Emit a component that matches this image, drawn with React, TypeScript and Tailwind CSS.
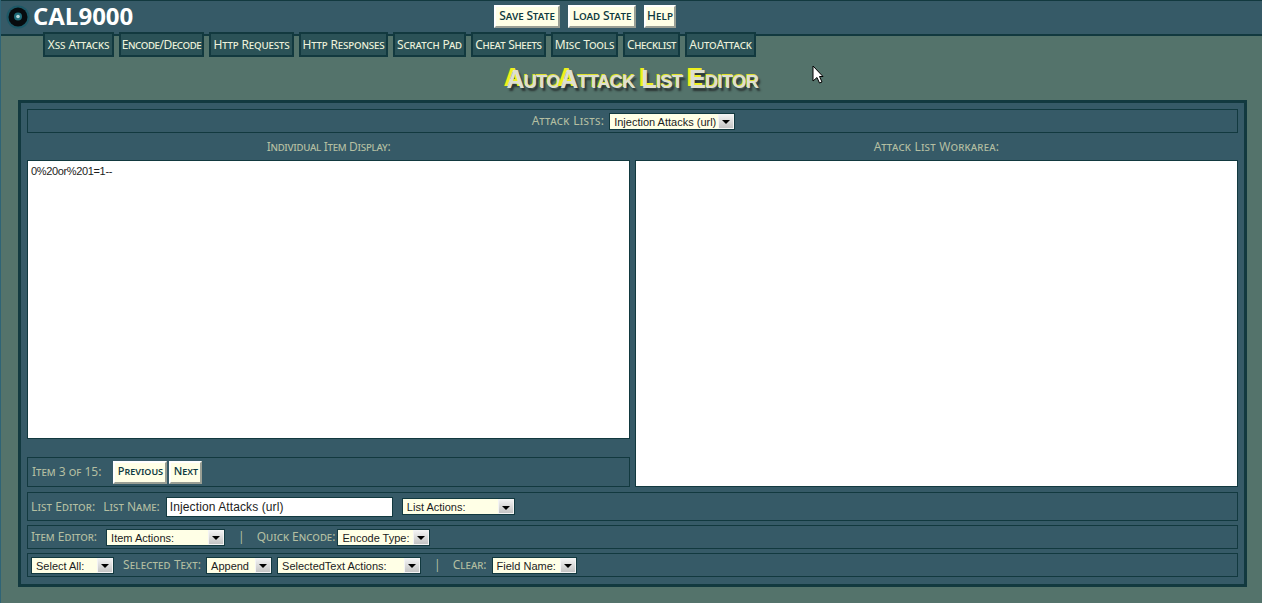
const navItems = [
  { label: "Xss Attacks", width: "w-[71px] tracking-[-0.1px]" },
  { label: "Encode/Decode", width: "w-[85px] tracking-[-0.4px]" },
  { label: "Http Requests", width: "w-[85px] tracking-[-0.15px]" },
  { label: "Http Responses", width: "w-[89px] tracking-[-0.15px]" },
  { label: "Scratch Pad", width: "w-[73px] tracking-[-0.15px]" },
  { label: "Cheat Sheets", width: "w-[75px] tracking-[-0.3px]" },
  { label: "Misc Tools", width: "w-[67px] tracking-[-0.15px]" },
  { label: "Checklist", width: "w-[57px] tracking-[-0.3px]" },
  { label: "AutoAttack", width: "w-[71px] tracking-[-0.15px]" },
];

function Select({ label, className }: { label: string; className: string }) {
  return (
    <div className={`flex h-[17px] shrink-0 border border-[#12393f] bg-[#ffffe6] ${className}`}>
      <span className="flex-1 overflow-hidden whitespace-nowrap pl-[4px] font-['Liberation_Sans',sans-serif] text-[11px] leading-[16px] text-[#1c1c1c] [font-variant:normal]">
        {label}
      </span>
      <span className="flex w-[16px] items-center justify-center border border-[#f4f4f4] bg-gradient-to-b from-[#f2f2f2] to-[#c4c4c4]">
        <span className="mt-[2px] h-0 w-0 border-x-[4px] border-t-[4px] border-x-transparent border-t-black" />
      </span>
    </div>
  );
}

function CreamButton({ label, className }: { label: string; className: string }) {
  return (
    <button className={`flex items-center justify-center border-2 border-b-[#9a9f94] border-l-[#ffffff] border-r-[#9a9f94] border-t-[#ffffff] bg-[#ffffe6] pb-[1px] font-medium text-[#0e3a40] ${className}`}>
      {label}
    </button>
  );
}

// capitals carry the wider yellow offset, like the reference's title
function Cap({ children }: { children: string }) {
  return <span className="[text-shadow:-3px_-2px_0_#eef01e,2px_3px_2px_#2a3433]">{children}</span>;
}

export default function App() {
  return (
    <div className="min-h-screen border-l border-l-[#2f6476] bg-[#54736b] font-['Noto_Sans',sans-serif] [font-variant:small-caps]">
      <header className="flex h-[36px] items-start border-y-2 border-t-[1px] border-y-[#12393f] bg-[#365a67]">
        <svg viewBox="0 0 24 24" className="ml-[5px] mt-[4px] h-[24px] w-[24px] shrink-0">
          <circle cx="12" cy="12" r="11.5" fill="#1d5866" />
          <circle cx="12" cy="12" r="9.5" fill="#070b0e" />
          <circle cx="12" cy="11.5" r="4" fill="#1f6b78" />
          <circle cx="12" cy="11.5" r="1.8" fill="#b9d6d8" />
        </svg>
        <h1 className="ml-[3px] w-[461px] shrink-0 font-['Open_Sans',sans-serif] text-[24px] font-bold leading-[29px] text-white [font-variant:normal]">
          CAL9000
        </h1>
        <div className="mt-[4px] flex gap-[8px]">
          <CreamButton label="Save State" className="h-[23px] w-[66px] text-[12px] tracking-[-0.1px]" />
          <CreamButton label="Load State" className="h-[23px] w-[68px] text-[12px] tracking-[-0.1px]" />
          <CreamButton label="Help" className="h-[23px] w-[32px] text-[12px]" />
        </div>
      </header>

      <nav className="-mt-[4px] ml-[42px] flex gap-[5px]">
        {navItems.map((item) => (
          <a
            key={item.label}
            className={`flex h-[25px] items-center justify-center whitespace-nowrap border-2 border-[#12393f] bg-[#2b5257] text-[12px] leading-none text-[#eef2dc] ${item.width}`}
          >
            {item.label}
          </a>
        ))}
      </nav>

      <h2 className="mt-[7px] pl-[2px] text-center font-['Liberation_Sans',sans-serif] text-[25px] font-bold leading-[30px] tracking-[-0.5px] text-[#dedfd0] [text-shadow:-1px_-1px_0_#dfe02a,2px_3px_2px_#2a3433]">
        <Cap>A</Cap>uto<Cap>A</Cap>ttack <Cap>L</Cap>ist <Cap>E</Cap>ditor
      </h2>

      <main className="ml-[17px] mr-[15px] mt-[6px] h-[487px] border-[3px] border-[#12393f] bg-[#365a67] px-[6px] pt-[6px] text-[12px] text-[#b4bfa2]">
        <div className="flex h-[24px] items-center justify-center gap-[5px] border border-[#12393f] pl-[2px]">
          <span className="tracking-[0.3px]">Attack Lists:</span>
          <Select label="Injection Attacks (url)" className="w-[126px]" />
        </div>

        <div className="grid grid-cols-[603px_603px] gap-x-[5px]">
          <div>
            <div className="flex h-[27px] items-center justify-center tracking-[-0.3px]">Individual Item Display:</div>
            <div className="h-[279px] border border-[#12393f] bg-white pl-[3px] pt-[3px] font-['Liberation_Sans',sans-serif] text-[11px] leading-[14px] tracking-[-0.35px] text-[#1c1c1c] [font-variant:normal]">
              0%20or%201=1--
            </div>
            <div className="mt-[18px] flex h-[30px] items-center border border-[#12393f] pl-[4px]">
              <span className="mr-[12px]">Item 3 of 15:</span>
              <CreamButton label="Previous" className="h-[23px] w-[54px] text-[11px]" />
              <CreamButton label="Next" className="ml-[2px] h-[23px] w-[33px] text-[11px]" />
            </div>
          </div>
          <div>
            <div className="flex h-[27px] items-center justify-center tracking-[0.2px]">Attack List Workarea:</div>
            <div className="h-[327px] border border-[#12393f] bg-white" />
          </div>
        </div>

        <div className="mt-[5px] flex h-[29px] items-center border border-[#12393f] pl-[3px]">
          <span className="tracking-[0.1px]">List Editor:</span>
          <span className="ml-[8px]">List Name:</span>
          <div className="ml-[6px] h-[20px] w-[227px] border border-[#12393f] bg-white pl-[3px] font-['Liberation_Sans',sans-serif] text-[12px] leading-[19px] tracking-[0.1px] text-[#1c1c1c] [font-variant:normal]">
            Injection Attacks (url)
          </div>
          <Select label="List Actions:" className="ml-[9px] w-[113px]" />
        </div>

        <div className="mt-[4px] flex h-[24px] items-center border border-[#12393f] pl-[3px]">
          <span>Item Editor:</span>
          <Select label="Item Actions:" className="ml-[9px] w-[119px]" />
          <span className="ml-[13px]">|</span>
          <span className="ml-[12px]">Quick Encode:</span>
          <Select label="Encode Type:" className="ml-[2px] w-[93px]" />
        </div>

        <div className="mt-[4px] flex h-[24px] items-center border border-[#12393f] pl-[3px]">
          <Select label="Select All:" className="w-[83px]" />
          <span className="ml-[9px] tracking-[0.15px]">Selected Text:</span>
          <Select label="Append" className="ml-[5px] w-[66px]" />
          <Select label="SelectedText Actions:" className="ml-[5px] w-[144px]" />
          <span className="ml-[13px]">|</span>
          <span className="ml-[12px]">Clear:</span>
          <Select label="Field Name:" className="ml-[5px] w-[85px]" />
        </div>
      </main>

      {/* mouse cursor in the shot */}
      <svg viewBox="0 0 12 19" className="absolute left-[812px] top-[65px] h-[19px] w-[12px]">
        <path d="M1 1v15l4-3.5 2.5 5.5 2.5-1-2.5-5.5H11z" fill="white" stroke="black" strokeWidth="1" />
      </svg>
    </div>
  );
}
